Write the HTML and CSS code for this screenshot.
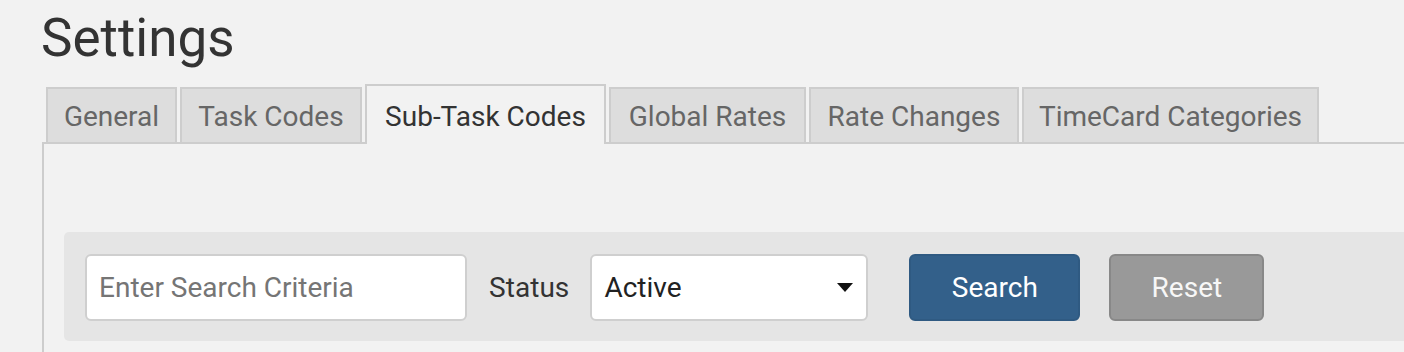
FILE: index.html
```html
<!DOCTYPE html>
<html lang="en">
<head>
<meta charset="utf-8">
<title>Settings</title>
<link rel="stylesheet" href="styles.css">
</head>
<body>
<div class="page">
  <h1 class="title">Settings</h1>
  <ul class="tabs">
    <li class="tab tab-general">General</li>
    <li class="tab tab-task">Task Codes</li>
    <li class="tab tab-subtask active">Sub-Task Codes</li>
    <li class="tab tab-global">Global Rates</li>
    <li class="tab tab-rate">Rate Changes</li>
    <li class="tab tab-timecard">TimeCard Categories</li>
  </ul>
  <div class="panel">
    <div class="searchbar">
      <input class="search-input" type="text" placeholder="Enter Search Criteria">
      <label class="status-label">Status</label>
      <div class="select">
        <span class="select-value">Active</span>
        <svg class="caret" width="16" height="9" viewBox="0 0 16 9"><path d="M0 0H16L8 9Z" fill="#111"/></svg>
      </div>
      <button class="btn btn-search" type="button">Search</button>
      <button class="btn btn-reset" type="button">Reset</button>
    </div>
  </div>
</div>
</body>
</html>
```
FILE: styles.css
```css
* { box-sizing: border-box; }
html, body {
  margin: 0;
  padding: 0;
  background: #f2f2f2;
  font-family: Roboto, "Liberation Sans", Arial, sans-serif;
  overflow: hidden;
}
.page {
  padding-left: 42px;
  width: 1404px;
  height: 352px;
}
.title {
  margin: 6px 0 14px -1px;
  font-size: 53px;
  line-height: 64px;
  font-weight: 400;
  color: #333;
}
.tabs {
  list-style: none;
  margin: 0;
  padding: 0 0 0 4px;
  display: flex;
  align-items: flex-end;
  height: 58px;
}
.tab {
  height: 55px;
  padding: 1px 0 0;
  margin-right: 3px;
  border: 2px solid #cdcdcd;
  border-bottom: 0;
  background: #dddddd;
  color: #666;
  font-size: 28px;
  display: flex;
  align-items: center;
  justify-content: center;
  white-space: nowrap;
}
.tab-general { width: 131px; }
.tab-task { width: 182px; }
.tab-subtask { width: 241px; }
.tab-global { width: 197px; }
.tab-rate { width: 210px; }
.tab-timecard { width: 297px; }
.tab.active {
  position: relative;
  z-index: 1;
  height: 60px;
  margin-bottom: -2px;
  background: #f2f2f2;
  color: #333;
  padding-top: 2px;
}
.panel {
  border-top: 2px solid #cdcdcd;
  border-left: 2px solid #cdcdcd;
  padding: 88px 0 0 20px;
  height: 220px;
}
.searchbar {
  background: #e5e5e5;
  border-radius: 5px 0 0 5px;
  padding: 22px 21px 20px;
  display: flex;
  align-items: center;
  height: 109px;
}
.search-input {
  width: 382px;
  height: 67px;
  border: 2px solid #cfcfcf;
  border-radius: 6px;
  background: #fff;
  padding: 0 12px;
  font-family: inherit;
  font-size: 28px;
  color: #333;
  outline: none;
}
.search-input::placeholder { color: #757575; }
.status-label {
  margin-left: 22px;
  font-size: 28px;
  color: #333;
  letter-spacing: 0.05px;
}
.select {
  margin-left: 21px;
  width: 278px;
  height: 67px;
  border: 2px solid #cfcfcf;
  border-radius: 6px;
  background: #fff;
  display: flex;
  align-items: center;
  justify-content: space-between;
  padding: 0 13px 0 12px;
  font-size: 28px;
  color: #222;
}
.caret { display: block; }
.btn {
  height: 67px;
  border-radius: 6px;
  font-family: inherit;
  font-size: 28px;
  color: #fff;
  padding: 0;
}
.btn-search {
  margin-left: 41px;
  width: 171px;
  background: #33608a;
  border: 2px solid #2f5a82;
}
.btn-reset {
  margin-left: 29px;
  width: 155px;
  background: #999999;
  border: 2px solid #888888;
  color: #f7f7f7;
}
```
